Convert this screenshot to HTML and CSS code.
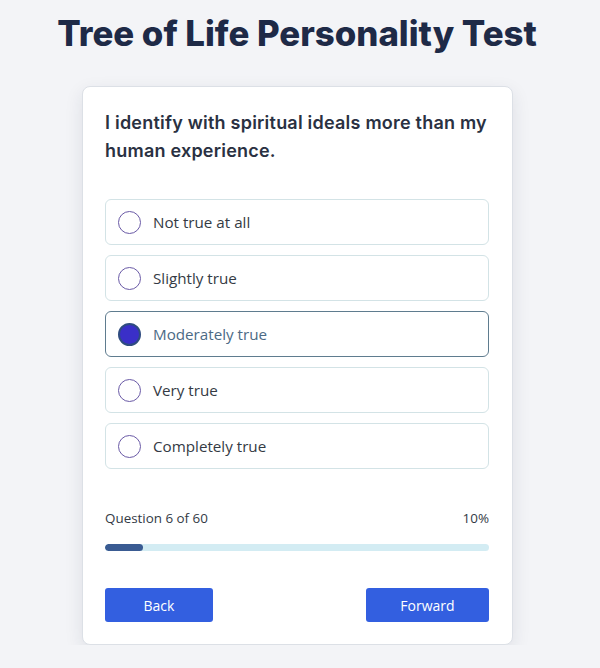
FILE: index.html
```html
<!DOCTYPE html>
<html lang="en">
<head>
<meta charset="utf-8">
<title>Tree of Life Personality Test</title>
<link rel="stylesheet" href="styles.css">
</head>
<body>
<h1 class="title">Tree of Life Personality Test</h1>
<main class="card">
  <p class="question">I identify with spiritual ideals more than my human experience.</p>
  <div class="options">
    <label class="option"><span class="radio"></span><span class="label">Not true at all</span></label>
    <label class="option"><span class="radio"></span><span class="label">Slightly true</span></label>
    <label class="option selected"><span class="radio"></span><span class="label">Moderately true</span></label>
    <label class="option"><span class="radio"></span><span class="label">Very true</span></label>
    <label class="option"><span class="radio"></span><span class="label">Completely true</span></label>
  </div>
  <div class="progress-info">
    <span>Question 6 of 60</span>
    <span>10%</span>
  </div>
  <div class="track"><div class="fill" style="width:10%"></div></div>
  <div class="nav">
    <button class="btn back">Back</button>
    <button class="btn forward">Forward</button>
  </div>
</main>
</body>
</html>
```
FILE: styles.css
```css
html, body {
  margin: 0;
  padding: 0;
}
body {
  background: #f3f4f7;
  font-family: "Open Sans", "Noto Sans", sans-serif;
  color: #333a45;
  padding-top: 12px;
}
.title {
  margin: 0;
  padding-right: 6px;
  text-align: center;
  font-family: "Inter", "Noto Sans", sans-serif;
  font-weight: 800;
  font-size: 34.8px;
  line-height: 42px;
  letter-spacing: 0;
  color: #1e2a47;
}
.card {
  box-sizing: border-box;
  width: 431px;
  margin: 32px 0 0 82px;
  background: #fff;
  border: 1px solid #dce0e6;
  border-radius: 8px;
  box-shadow: 0 6px 18px rgba(30, 40, 70, 0.10);
  padding: 22px 23px 22px 22px;
}
.question {
  margin: 0 0 34px 0;
  font-family: "Inter", "Noto Sans", sans-serif;
  font-weight: 600;
  font-size: 18px;
  line-height: 28px;
  letter-spacing: 0.22px;
  color: #2a3142;
}
.options {
  display: flex;
  flex-direction: column;
  gap: 10px;
}
.option {
  box-sizing: border-box;
  height: 46px;
  display: flex;
  align-items: center;
  gap: 12px;
  padding-left: 12px;
  border: 1px solid #d3e3e6;
  border-radius: 6px;
  background: #fff;
}
.radio {
  box-sizing: border-box;
  width: 23px;
  height: 23px;
  border-radius: 50%;
  border: 1.5px solid #6a5aa6;
  background: #fff;
}
.label {
  font-size: 15.2px;
  color: #343a44;
}
.option.selected {
  border-color: #5f7c8f;
}
.option.selected .radio {
  background: #3a2fc8;
  border: 2px solid #2f4c80;
}
.option.selected .label {
  color: #4c6a85;
}
.progress-info {
  display: flex;
  justify-content: space-between;
  margin-top: 40px;
  font-size: 13.4px;
  line-height: 18px;
  color: #333a45;
}
.track {
  margin-top: 17px;
  height: 7px;
  border-radius: 4px;
  background: #d3ecf3;
  overflow: hidden;
}
.fill {
  height: 100%;
  border-radius: 4px;
  background: #3a5b92;
}
.nav {
  display: flex;
  justify-content: space-between;
  margin-top: 37px;
}
.btn {
  height: 34px;
  border: none;
  border-radius: 3px;
  background: #335fe0;
  color: #fff;
  font-family: "Open Sans", "Noto Sans", sans-serif;
  font-size: 14px;
}
.back { width: 108px; }
.forward { width: 123px; }
```
